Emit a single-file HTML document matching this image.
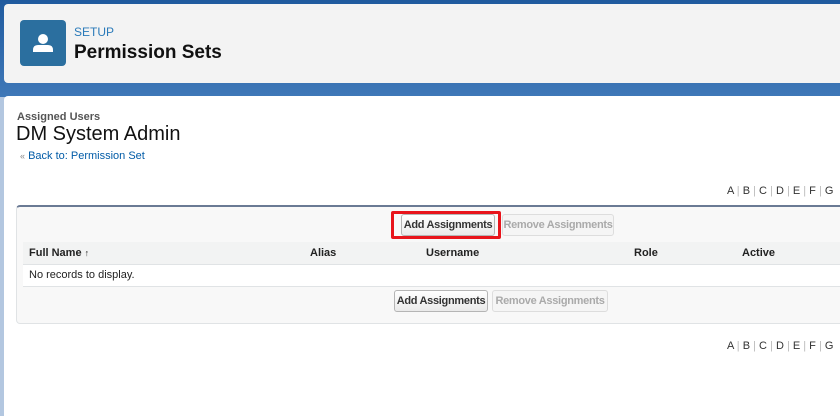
<!DOCTYPE html>
<html><head><style>
body{margin:0;width:840px;height:410px;overflow:hidden;background:#b3c7e0;font-family:"Liberation Sans",Arial,sans-serif;position:relative}
.top{position:absolute;left:0;top:0;width:840px;height:97px;background:linear-gradient(#1f5a9e,#3f78b8)}
.hdr{position:absolute;left:4px;top:4px;width:840px;height:79px;background:#f3f3f3;border-radius:4px}
.icon{position:absolute;left:20px;top:20px;width:46px;height:46px;background:#2b6f9f;border-radius:4px}
.main{position:absolute;left:4px;top:96px;width:840px;height:320px;background:#fff;border-radius:4px 0 0 0}
.t{position:absolute;white-space:nowrap}
.box{position:absolute;left:16px;top:205px;width:830px;height:116px;background:#f8f8f8;border:1px solid #e0e3e5;border-top:2px solid #6a7a94;border-radius:4px}
.btn{position:absolute;height:20px;border:1px solid #b5b5b5;border-radius:3px;background:linear-gradient(#fff,#eaeaea);font-size:11px;font-weight:bold;color:#333;line-height:20px;text-align:center;white-space:nowrap;letter-spacing:-0.3px;overflow:hidden}
.dis{color:#aaa;border-color:#ddd;background:#f5f5f5}
.th{position:absolute;top:242px;height:22px;background:#f2f3f3;border-bottom:1px solid #e0e3e5;font-size:11px;font-weight:bold;color:#222;line-height:22px}
.letters{font-size:11px;color:#333}
</style></head><body>
<div class="top"></div>
<div class="hdr"></div>
<div class="icon"><svg width="46" height="46"><circle cx="23" cy="19" r="5" fill="#fff"/><path d="M13 30q0-5 5-5h10q5 0 5 5v2H13z" fill="#fff"/></svg></div>
<div class="t" style="left:74px;top:25px;font-size:12px;color:#2a7ab9">SETUP</div>
<div class="t" style="left:74px;top:42px;font-size:19px;font-weight:bold;color:#111">Permission Sets</div>
<div class="main"></div>
<div class="t" style="left:17px;top:111px;font-size:11px;font-weight:bold;color:#555">Assigned Users</div>
<div class="t" style="left:16px;top:123px;font-size:20px;color:#111">DM System Admin</div>
<div class="t" style="left:20px;top:150px;font-size:11px;color:#015ba7"><span style="color:#888;font-size:9px">«</span> Back to: Permission Set</div>
<div class="t letters" style="left:727px;top:185px">A <span style="color:#bbb">|</span> B <span style="color:#bbb">|</span> C <span style="color:#bbb">|</span> D <span style="color:#bbb">|</span> E <span style="color:#bbb">|</span> F <span style="color:#bbb">|</span> G</div>
<div class="box"></div>
<div style="position:absolute;left:391px;top:211px;width:110px;height:28px;border:3px solid #e8141b;border-radius:2px;box-sizing:border-box"></div>
<div class="btn" style="left:401px;top:214px;width:92px">Add Assignments</div>
<div class="btn dis" style="left:502px;top:214px;width:110px">Remove Assignments</div>
<div class="th" style="left:23px;width:276px;padding-left:6px;border-right:1px solid #e0e3e5">Full Name <span style="font-size:9px">↑</span></div>
<div class="th" style="left:304px;width:110px;padding-left:6px;border-right:1px solid #e0e3e5">Alias</div>
<div class="th" style="left:420px;width:202px;padding-left:6px;border-right:1px solid #e0e3e5">Username</div>
<div class="th" style="left:628px;width:102px;padding-left:6px;border-right:1px solid #e0e3e5">Role</div>
<div class="th" style="left:736px;width:110px;padding-left:6px">Active</div>
<div style="position:absolute;left:23px;top:265px;width:820px;height:21px;background:#fff;border-bottom:1px solid #e0e3e5;font-size:11px;line-height:20px;color:#222;padding-left:6px">No records to display.</div>
<div class="btn" style="left:394px;top:290px;width:92px">Add Assignments</div>
<div class="btn dis" style="left:492px;top:290px;width:114px">Remove Assignments</div>
<div class="t letters" style="left:727px;top:340px">A <span style="color:#bbb">|</span> B <span style="color:#bbb">|</span> C <span style="color:#bbb">|</span> D <span style="color:#bbb">|</span> E <span style="color:#bbb">|</span> F <span style="color:#bbb">|</span> G</div>
</body></html>
